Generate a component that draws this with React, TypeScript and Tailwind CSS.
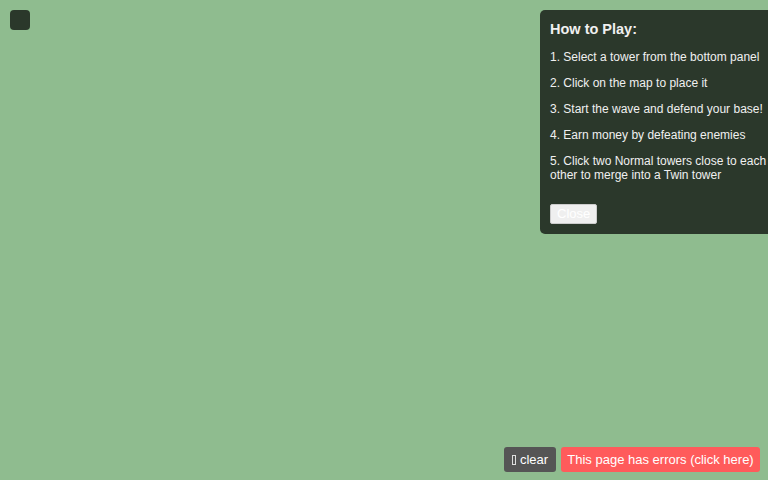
export default function App() {
  const steps = [
    '1. Select a tower from the bottom panel',
    '2. Click on the map to place it',
    '3. Start the wave and defend your base!',
    '4. Earn money by defeating enemies',
    '5. Click two Normal towers close to each other to merge into a Twin tower',
  ]

  return (
    <div className="flex h-[480px] w-[768px] flex-col overflow-hidden bg-[#8fbc8f] px-[8px] pb-[8px] pt-[10px] font-['Liberation_Sans',Arial,sans-serif]">

      {/* top: menu toggle + instructions */}
      <div className="flex items-start pl-[2px]">
        <div className="h-5 w-5 shrink-0 rounded bg-[#2b382b]" />

        <div className="ml-[510px] w-[240px] shrink-0 rounded-[5px] bg-[#2b382b] px-[10px] pb-[9px] pt-[11px] text-[#f0f0f0]">
          <h3 className="mb-[12px] text-[14.5px] font-bold leading-[17px]">
            How to Play:
          </h3>

          <div className="flex flex-col gap-[12px] text-[12px] leading-[14px]">
            {steps.map((s) => (
              <p key={s}>{s}</p>
            ))}
          </div>

          <button className="mt-[22px] rounded-[2px] border border-[#cccccc] bg-[#efefef] px-[6px] py-[1px] text-[13px] leading-[16px] text-white">
            Close
          </button>
        </div>
      </div>

      {/* error bar */}
      <div className="mt-auto flex justify-end gap-[5px] text-[13px] text-white">
        <div className="flex h-[25px] w-[52px] items-center justify-center gap-[4px] rounded-[3px] bg-[#555555]">
          <span className="inline-block h-[10px] w-[4px] border border-white/80" />
          clear
        </div>
        <div className="flex h-[25px] w-[199px] items-center justify-center rounded-[3px] bg-[#ff5b5b]">
          This page has errors (click here)
        </div>
      </div>

    </div>
  )
}
